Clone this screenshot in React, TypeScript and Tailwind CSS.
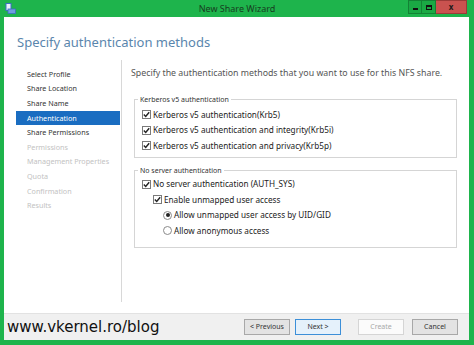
const navItems = [
  { label: "Select Profile", state: "done" },
  { label: "Share Location", state: "done" },
  { label: "Share Name", state: "done" },
  { label: "Authentication", state: "active" },
  { label: "Share Permissions", state: "done" },
  { label: "Permissions", state: "off" },
  { label: "Management Properties", state: "off" },
  { label: "Quota", state: "off" },
  { label: "Confirmation", state: "off" },
  { label: "Results", state: "off" },
];

const Check = () => (
  <span className="w-[9px] h-[9px] border border-[#7a7a7a] bg-white flex items-center justify-center shrink-0">
    <svg width="7" height="7" viewBox="0 0 7 7">
      <path d="M0.8 3.6 L2.7 5.5 L6.2 1.2" fill="none" stroke="#222" strokeWidth="1.4" />
    </svg>
  </span>
);

const Radio = ({ on }: { on?: boolean }) => (
  <span className="w-[9px] h-[9px] rounded-full border border-[#8a8a8a] bg-white flex items-center justify-center shrink-0">
    {on && <span className="w-[4px] h-[4px] rounded-full bg-[#222]" />}
  </span>
);

const Row = ({ indent, children, label }: { indent: string; children: React.ReactNode; label: string }) => (
  <div className={`h-[15.5px] flex items-center ${indent}`}>
    {children}
    <span className="text-[8.2px] text-[#222] whitespace-nowrap">{label}</span>
  </div>
);

const Btn = ({ label, kind }: { label: string; kind: "normal" | "focus" | "disabled" }) => {
  const cls =
    kind === "focus"
      ? "bg-[#e5f1fb] border-[#3c8fd8] text-[#333]"
      : kind === "disabled"
      ? "bg-[#fbfbfb] border-[#d5d5d5] text-[#a8a8a8]"
      : "bg-[#e3e3e3] border-[#a8a8a8] text-[#333]";
  return (
    <div className={`w-[46px] h-[16px] border flex items-center justify-center text-[7px] ${cls}`}>
      {label}
    </div>
  );
};

export default function App() {
  return (
    <div
      className="w-[474px] h-[345px] bg-[#1eb44c] flex flex-col overflow-hidden"
      style={{ fontFamily: '"Noto Sans", "Open Sans", sans-serif' }}
    >
      {/* title bar */}
      <div className="h-[17px] relative flex items-center justify-center">
        <div className="absolute left-[5px] top-[3px] w-[11px] h-[11px]">
          <svg width="11" height="11" viewBox="0 0 11 11">
            <rect x="1" y="0.5" width="5" height="7" fill="#e8f0fa" stroke="#3d6fc4" />
            <rect x="3" y="6" width="7.5" height="4.5" fill="#6f9de0" stroke="#3d6fc4" strokeWidth="0.8" />
          </svg>
        </div>
        <span className="text-[9px] text-[#173d20]">New Share Wizard</span>
        <div className="absolute right-[7px] top-0 flex">
          <div className="w-[14px] h-[14px] bg-[#1aa944] border border-[#138235] flex items-center justify-center">
            <span className="w-[5px] h-[2px] bg-[#111] mt-[3px]" />
          </div>
          <div className="w-[14px] h-[14px] bg-[#1aa944] border border-l-0 border-[#138235] flex items-center justify-center">
            <span className="w-[6px] h-[5px] border border-t-2 border-[#111]" />
          </div>
          <div className="w-[31px] h-[14px] bg-[#c9524f] border border-l-0 border-[#9b3a38] flex items-center justify-center text-[8px] font-bold text-[#1a1a1a] leading-none">
            x
          </div>
        </div>
      </div>

      {/* client */}
      <div className="flex-1 ml-[4px] mr-[5px] mb-[5px] bg-white flex flex-col">
        <div className="h-[43px] pl-[13px] pt-[16px]">
          <h1 className="text-[13px] text-[#5a86ad] leading-[18px] whitespace-nowrap">
            Specify authentication methods
          </h1>
        </div>

        <div className="flex-1 flex pb-[11px]">
          <nav className="w-[118px] border-r border-[#d8d8d8] pl-[12px] pt-[7px]">
            {navItems.map((n) => (
              <div
                key={n.label}
                className={`h-[14.6px] mr-[1px] pl-[11px] flex items-center text-[7.2px] whitespace-nowrap ${
                  n.state === "active"
                    ? "bg-[#1a6dc1] text-white"
                    : n.state === "done"
                    ? "text-[#333]"
                    : "text-[#c2c2c2]"
                }`}
              >
                {n.label}
              </div>
            ))}
          </nav>

          <main className="flex-1 pl-[12px] pr-[12px] pt-[7px]">
            <p className="text-[8.8px] leading-[13px] text-[#555] -ml-[3px] whitespace-nowrap">
              Specify the authentication methods that you want to use for this NFS share.
            </p>

            <fieldset className="mt-[14px] border border-[#d5d5d5] pl-[7px] pt-[2px] pb-[3px]">
              <legend className="-ml-[4px] px-[2px] text-[7px] leading-[11px] text-[#333]">
                Kerberos v5 authentication
              </legend>
              <Row indent="gap-[2px]" label="Kerberos v5 authentication(Krb5)">
                <Check />
              </Row>
              <Row indent="gap-[2px]" label="Kerberos v5 authentication and integrity(Krb5i)">
                <Check />
              </Row>
              <Row indent="gap-[2px]" label="Kerberos v5 authentication and privacy(Krb5p)">
                <Check />
              </Row>
            </fieldset>

            <fieldset className="mt-[7px] border border-[#d5d5d5] pl-[7px] pt-[1px] pb-[8px]">
              <legend className="-ml-[4px] px-[2px] text-[7px] leading-[11px] text-[#333]">
                No server authentication
              </legend>
              <Row indent="gap-[2px]" label="No server authentication (AUTH_SYS)">
                <Check />
              </Row>
              <Row indent="pl-[11px] gap-[2px]" label="Enable unmapped user access">
                <Check />
              </Row>
              <Row indent="pl-[21px] gap-[2px]" label="Allow unmapped user access by UID/GID">
                <Radio on />
              </Row>
              <Row indent="pl-[21px] gap-[2px]" label="Allow anonymous access">
                <Radio />
              </Row>
            </fieldset>
          </main>
        </div>

        <footer className="h-[27px] bg-[#f0f0f0] border-t border-[#e2e2e2] flex items-center">
          <span
            className="ml-[3px] text-[15px] text-[#111] leading-none"
            style={{ fontFamily: '"DejaVu Sans", sans-serif' }}
          >
            www.vkernel.ro/blog
          </span>
          <div className="ml-auto mr-[11px] flex items-center">
            <Btn label="< Previous" kind="normal" />
            <div className="ml-[5px]">
              <Btn label="Next >" kind="focus" />
            </div>
            <div className="ml-[17px]">
              <Btn label="Create" kind="disabled" />
            </div>
            <div className="ml-[8px]">
              <Btn label="Cancel" kind="normal" />
            </div>
          </div>
        </footer>
      </div>
    </div>
  );
}
